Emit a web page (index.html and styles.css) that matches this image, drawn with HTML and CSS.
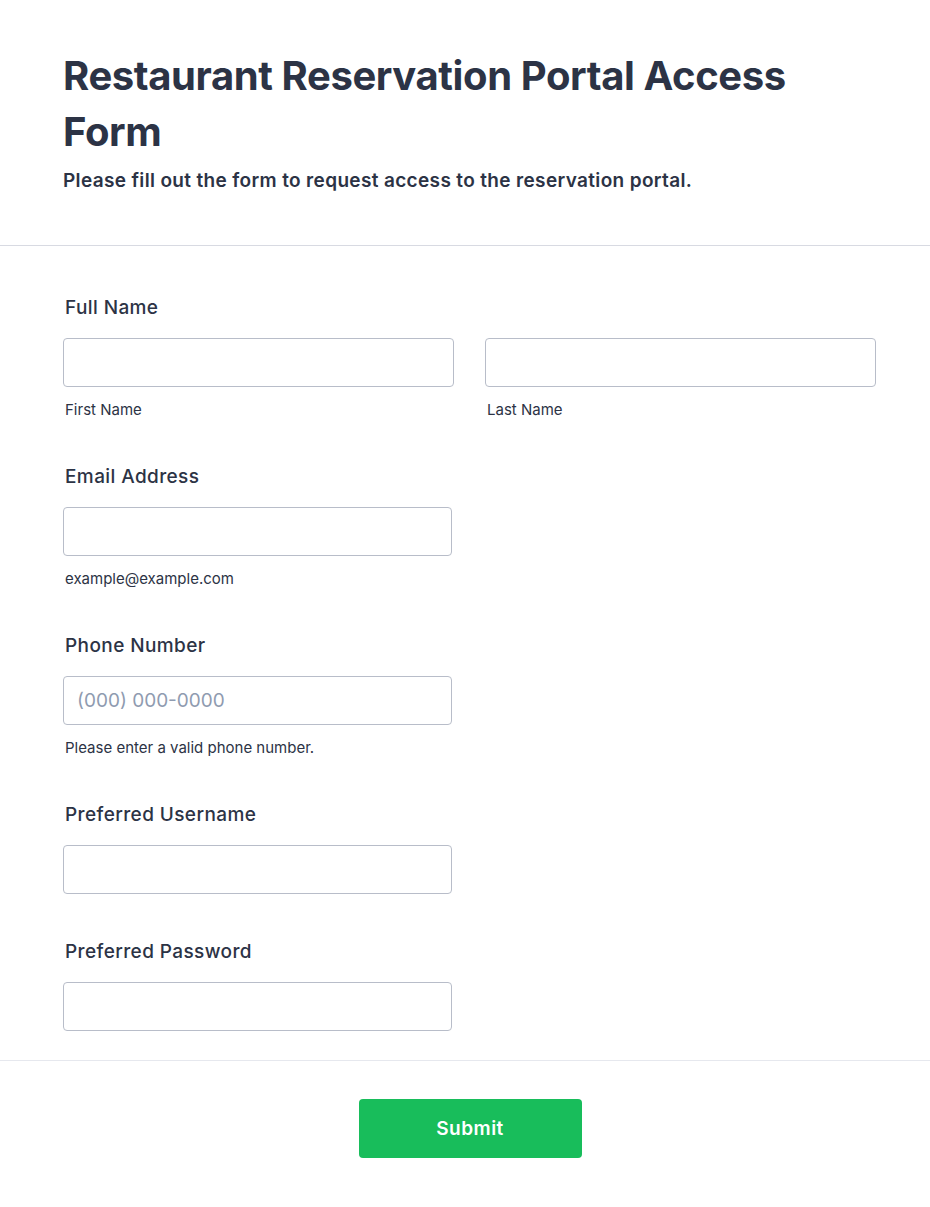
FILE: index.html
```html
<!DOCTYPE html>
<html lang="en">
<head>
    <meta charset="UTF-8">
    <meta name="viewport" content="width=device-width, initial-scale=1.0">
    <title>Restaurant Reservation Portal Access Form</title>
    <link rel="stylesheet" href="styles.css">
</head>
<body>
    <div class="form">
        <div class="form-header">
            <h1>Restaurant Reservation Portal Access Form</h1>
            <p class="subheader">Please fill out the form to request access to the reservation portal.</p>
        </div>

        <div class="form-body">
            <div class="field">
                <label class="field-label">Full Name</label>
                <div class="name-row">
                    <div class="name-col">
                        <input type="text" id="firstName">
                        <span class="sublabel">First Name</span>
                    </div>
                    <div class="name-col">
                        <input type="text" id="lastName">
                        <span class="sublabel">Last Name</span>
                    </div>
                </div>
            </div>

            <div class="field">
                <label class="field-label" for="email">Email Address</label>
                <input type="email" id="email" class="half">
                <span class="sublabel">example@example.com</span>
            </div>

            <div class="field">
                <label class="field-label" for="phone">Phone Number</label>
                <input type="tel" id="phone" class="half" placeholder="(000) 000-0000">
                <span class="sublabel">Please enter a valid phone number.</span>
            </div>

            <div class="field">
                <label class="field-label" for="username">Preferred Username</label>
                <input type="text" id="username" class="half">
            </div>

            <div class="field">
                <label class="field-label" for="password">Preferred Password</label>
                <input type="password" id="password" class="half">
            </div>
        </div>

        <div class="form-footer">
            <button type="submit" class="submit-btn">Submit</button>
        </div>
    </div>
</body>
</html>
```

FILE: styles.css
```css
body {
    font-family: Inter, 'Noto Sans', sans-serif;
    margin: 0;
    background-color: #fff;
    color: #2c3345;
}
.form {
    width: 930px;
}
.form-header {
    padding: 48px 54px 52px 63px;
    border-bottom: 1px solid #d8dae2;
}
h1 {
    margin: 0;
    font-size: 40px;
    line-height: 56px;
    font-weight: 700;
    letter-spacing: -0.4px;
}
.subheader {
    margin: 9px 0 0;
    font-size: 19px;
    line-height: 24px;
    font-weight: 600;
    letter-spacing: 0.35px;
}
.form-body {
    display: flex;
    flex-direction: column;
    gap: 46px;
    padding: 50px 54px 29px 63px;
    border-bottom: 1px solid #e6e8ee;
}
.field {
    display: flex;
    flex-direction: column;
}
.field-label {
    display: block;
    margin: 0 0 18px 2px;
    font-size: 19px;
    line-height: 24px;
    font-weight: 500;
    letter-spacing: 0.4px;
}
.name-row {
    display: flex;
    gap: 31px;
}
.name-col {
    flex: 1;
    display: flex;
    flex-direction: column;
}
input {
    box-sizing: border-box;
    height: 49px;
    padding: 0 13px;
    border: 1px solid #b8bdc9;
    border-radius: 4px;
    font-family: inherit;
    font-size: 19px;
    color: #2c3345;
    background: #fff;
}
input::placeholder {
    color: #8f9bb0;
}
.half {
    width: 389px;
}
.sublabel {
    display: block;
    margin: 13px 0 0 2px;
    font-size: 15px;
    line-height: 19px;
}
.form-footer {
    display: flex;
    justify-content: center;
    padding: 38px 0 50px 10px;
}
.submit-btn {
    width: 223px;
    height: 59px;
    border: none;
    border-radius: 4px;
    background-color: #18bd5b;
    color: #fff;
    font-family: inherit;
    font-size: 19px;
    font-weight: 600;
    letter-spacing: 0.5px;
    cursor: pointer;
}
```
